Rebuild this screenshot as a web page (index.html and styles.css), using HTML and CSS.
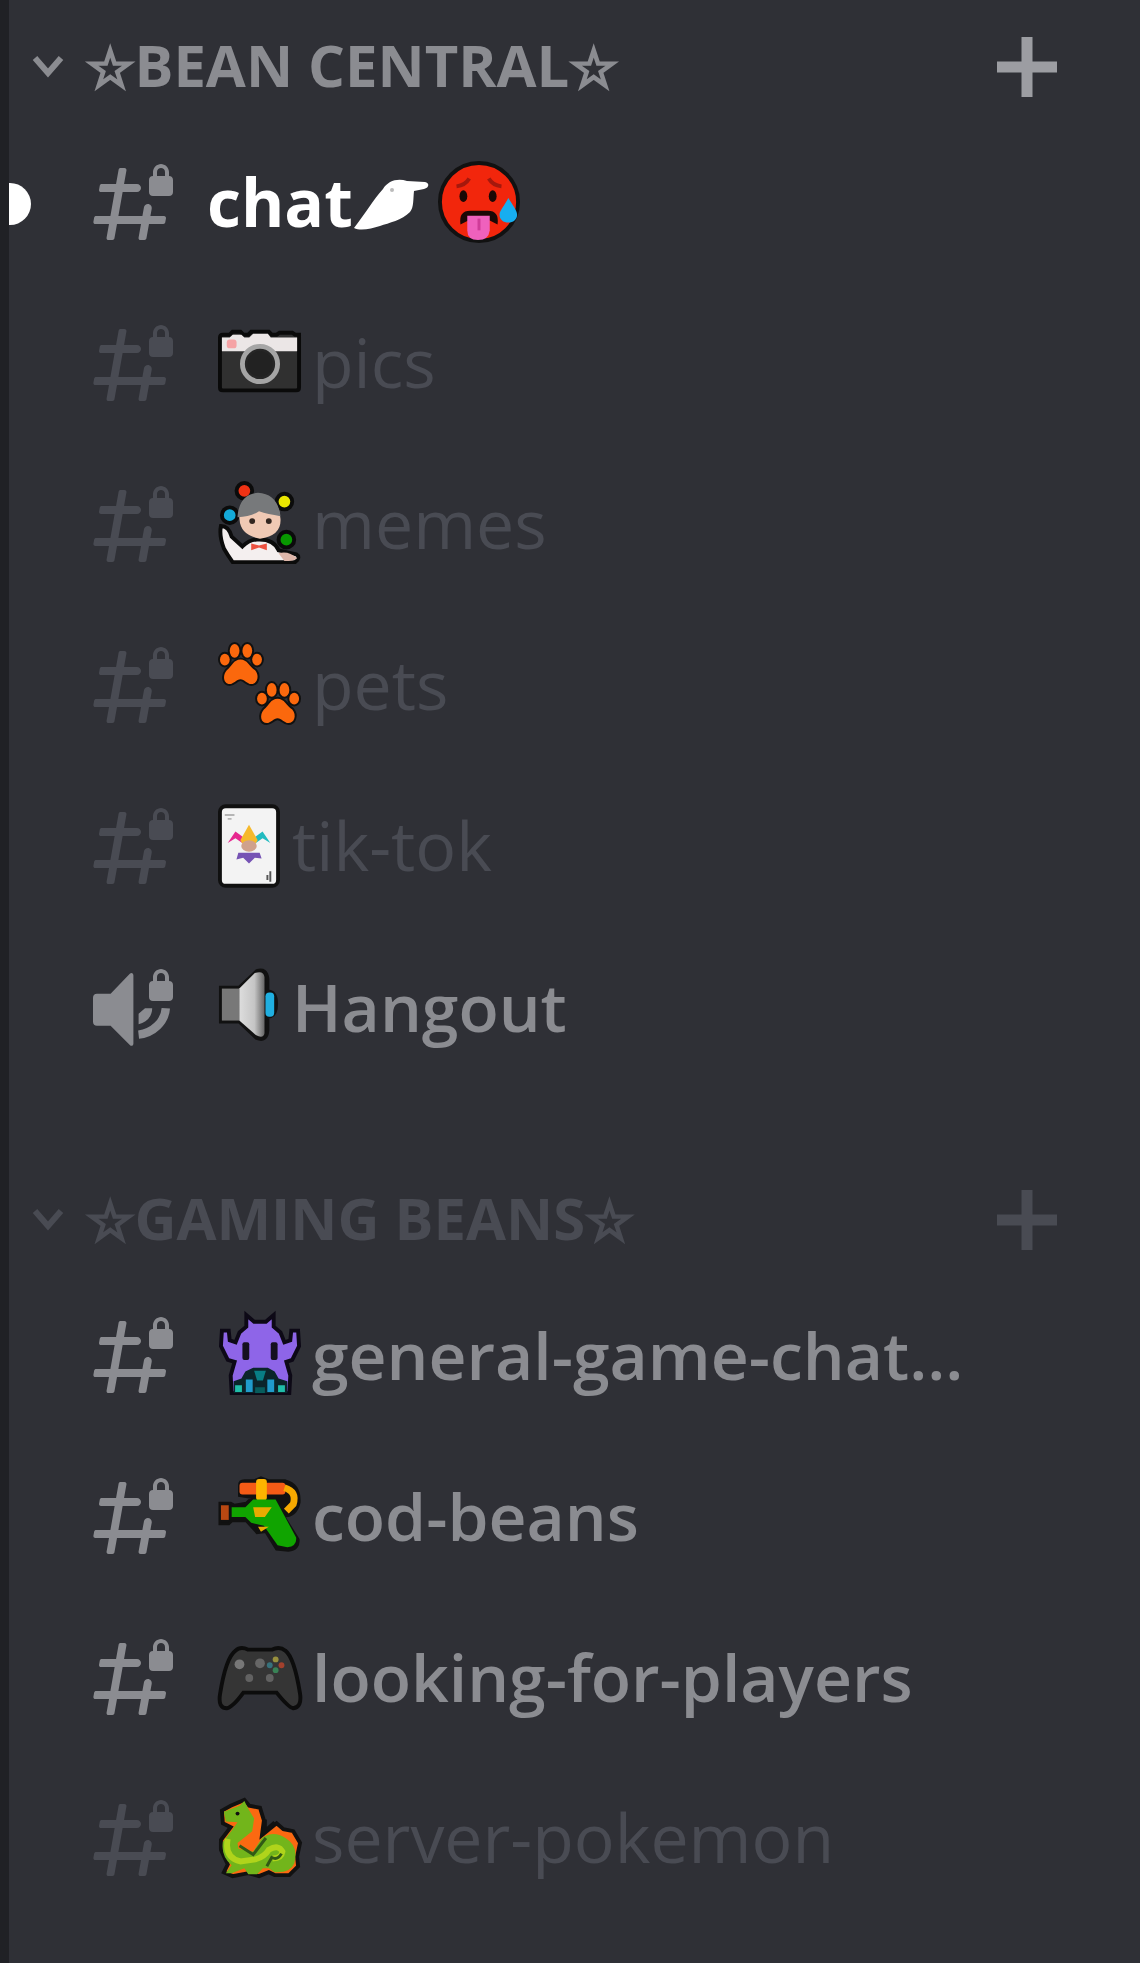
FILE: index.html
```
<!DOCTYPE html>
<html lang="en">
<head>
    <meta charset="UTF-8">
    <meta name="viewport" content="width=device-width, initial-scale=1.0">
    <title>Channels</title>
    <link rel="stylesheet" href="styles.css">
</head>
<body>
    <!-- Shared icons -->
    <svg class="sprite" aria-hidden="true">
        <symbol id="chevron" viewBox="0 0 32 24">
            <path d="M3 3L16 18L29 3" fill="none" stroke="currentColor" stroke-width="6"/>
        </symbol>
        <symbol id="plus" viewBox="0 0 60 60">
            <path d="M30 0V60M0 30H60" fill="none" stroke="currentColor" stroke-width="11"/>
        </symbol>
        <symbol id="lock" viewBox="0 0 24 24">
            <path fill="currentColor" fill-rule="evenodd" d="M21 5V4C21 2.9 20 2 19 2C18 2 17 2.9 17 4V5C16.4 5 16 5.4 16 6V9C16 9.6 16.4 10 17 10H21C21.6 10 22 9.6 22 9V6C22 5.4 21.6 5 21 5ZM20 5H18V4C18 3.4 18.5 3 19 3C19.5 3 20 3.4 20 4V5Z"/>
        </symbol>
        <symbol id="hash" viewBox="0 0 24 24">
            <path fill="currentColor" d="M14 8C14 7.45 13.55 7 13 7H9.76L10.37 3.59C10.42 3.28 10.18 3 9.87 3H8.89C8.65 3 8.44 3.17 8.4 3.41L7.76 7H4.18C3.94 7 3.73 7.17 3.69 7.41L3.51 8.41C3.46 8.72 3.69 9 4 9H7.41L6.35 15H2.77C2.53 15 2.32 15.17 2.28 15.41L2.1 16.41C2.05 16.72 2.28 17 2.6 17H6L5.39 20.41C5.34 20.72 5.58 21 5.89 21H6.87C7.11 21 7.32 20.83 7.36 20.59L8 17H14L13.39 20.41C13.34 20.72 13.58 21 13.89 21H14.87C15.11 21 15.32 20.83 15.36 20.59L16 17H19.58C19.82 17 20.03 16.83 20.07 16.59L20.25 15.59C20.3 15.28 20.07 15 19.75 15H16.35L16.68 13.16C16.78 12.55 16.32 12 15.71 12C15.23 12 14.82 12.34 14.74 12.81L14.35 15H8.35L9.41 9H13C13.55 9 14 8.55 14 8Z"/>
            <use href="#lock"/>
        </symbol>
        <symbol id="voice" viewBox="0 0 24 24">
            <path fill="currentColor" d="M11.2 3.2C11.6 2.8 12.1 3 12.1 3.6V20.6C12.1 21.2 11.6 21.4 11.2 21L6.4 16.2H3C2.4 16.2 2 15.8 2 15.2V9.2C2 8.6 2.4 8.2 3 8.2H6.4ZM13.4 13.2L15 11.8H16.8C16.8 13.8 15.4 15.4 13.4 15.8Z"/>
            <path fill="none" stroke="currentColor" stroke-width="2.1" d="M20.2 11.8C20 15.2 17 18 13.4 18.4"/>
            <use href="#lock"/>
        </symbol>
    </svg>

    <nav class="sidebar" aria-label="Channels">
        <section class="category">
            <header class="category-header">
                <button class="category-toggle" type="button">
                    <svg class="chevron"><use href="#chevron"/></svg>
                    <span class="category-name"><span class="star">☆</span>BEAN CENTRAL<span class="star">☆</span></span>
                </button>
                <button class="add-channel" type="button" aria-label="Create channel">
                    <svg class="plus"><use href="#plus"/></svg>
                </button>
            </header>
            <ul class="channel-list">
                <li>
                    <a href="#" class="channel unread">
                        <svg class="channel-icon"><use href="#hash"/></svg>
                        <span class="channel-name">chat</span>
                        <svg class="emoji-inline" viewBox="0 0 76 52">
                            <path fill="#fff" d="M1 50C12 36 20 22 30 11C35 3 44 0 54 3L72 4C77 5 76 10 71 11L61 13C60 22 61 29 57 34C49 42 36 45 27 48C18 51 7 53 1 50Z"/>
                            <circle cx="39" cy="12" r="2" fill="#bbb"/>
                        </svg>
                        <svg class="emoji-inline face" viewBox="0 0 86 86">
                            <circle cx="43" cy="43" r="40" fill="#f2260c" stroke="#111" stroke-width="4"/>
                            <path d="M20 27Q29 26 33 19M53 19Q57 26 66 27" fill="none" stroke="#a5180c" stroke-width="4"/>
                            <ellipse cx="27" cy="37" rx="4" ry="6" fill="#1b0805"/>
                            <ellipse cx="57" cy="37" rx="4" ry="6" fill="#1b0805"/>
                            <path d="M24 66Q22 52 34 52H52Q64 52 62 66L54 62H32Z" fill="#1b0805"/>
                            <path d="M31 57H54V72Q53 82 42 82Q31 82 31 72Z" fill="#ef61bd"/>
                            <path d="M43 60V72" stroke="#cf3c98" stroke-width="3"/>
                            <path d="M73 39C78 47 82 52 82 56C82 61 78 64 73 64C68 64 64 61 64 56C64 52 69 47 73 39Z" fill="#17aef0"/>
                        </svg>
                    </a>
                </li>
                <li>
                    <a href="#" class="channel muted">
                        <svg class="channel-icon"><use href="#hash"/></svg>
                        <svg class="emoji" viewBox="0 0 86 86">
                            <path d="M5 14H12L15 11H23L26 14H31L34 11H52L55 14H60L63 12H76L79 14H83V68Q83 71 80 71H5Q2 71 2 68V17Q2 14 5 14Z" fill="#303030" stroke="#0a0a0a" stroke-width="4"/>
                            <path d="M4 17H12L15 14H24L27 17H32L36 13H51L54 17H81V31H4Z" fill="#ebe6e6"/>
                            <rect x="9" y="19" width="10" height="9" rx="3" fill="#f5a3a5"/>
                            <circle cx="43" cy="44" r="18" fill="#262626" stroke="#a5a5a5" stroke-width="5"/>
                            <circle cx="43" cy="44" r="13" fill="#222"/>
                        </svg>
                        <span class="channel-name">pics</span>
                    </a>
                </li>
                <li>
                    <a href="#" class="channel muted">
                        <svg class="channel-icon"><use href="#hash"/></svg>
                        <svg class="emoji" viewBox="0 0 86 86">
                            <g stroke="#0b0b0b" stroke-width="4">
                                <path d="M3 45Q11 45 14 56L25 66Q32 59 40 59Q57 58 62 70L80 74Q85 77 79 82H15Q10 75 6 68Q1 55 3 45Z" fill="#f4efef"/>
                                <circle cx="27" cy="9" r="8" fill="#ef3214"/>
                                <circle cx="68" cy="20" r="8" fill="#e9e500"/>
                                <circle cx="12" cy="34" r="8" fill="#14aad8"/>
                                <circle cx="70" cy="59" r="8" fill="#089900"/>
                            </g>
                            <path d="M22 38Q20 13 41 13Q62 13 64 38Q65 55 43 58Q23 55 22 38Z" fill="#f0c9b4"/>
                            <path d="M20 35Q22 12 41 11Q61 12 64 35Q51 33 42 30Q33 36 20 36Z" fill="#77797b"/>
                            <circle cx="35" cy="40" r="3" fill="#332620"/>
                            <circle cx="52" cy="40" r="3" fill="#332620"/>
                            <path d="M34 63L42 65L50 63V70L42 67L34 70Z" fill="#ed5140"/>
                            <path d="M62 73Q72 70 81 78Q78 81 68 81Z" fill="#dfb7aa"/>
                        </svg>
                        <span class="channel-name">memes</span>
                    </a>
                </li>
                <li>
                    <a href="#" class="channel muted">
                        <svg class="channel-icon"><use href="#hash"/></svg>
                        <svg class="emoji" viewBox="0 0 86 86">
                            <defs>
                                <g id="paw">
                                    <ellipse cx="6" cy="17" rx="5" ry="6"/>
                                    <ellipse cx="16" cy="8" rx="5" ry="7"/>
                                    <ellipse cx="29" cy="8" rx="5" ry="7"/>
                                    <ellipse cx="39" cy="17" rx="5" ry="6"/>
                                    <path d="M22 17C29 17 31 24 37 28C42 34 39 42 33 42C29 42 26 37 22 37C18 37 15 42 11 42C5 42 3 34 8 28C13 24 15 17 22 17Z"/>
                                </g>
                            </defs>
                            <g fill="#fb680d" stroke="#111" stroke-width="4" paint-order="stroke">
                                <use href="#paw" x="1"/>
                                <use href="#paw" x="39" y="40"/>
                            </g>
                        </svg>
                        <span class="channel-name">pets</span>
                    </a>
                </li>
                <li>
                    <a href="#" class="channel muted">
                        <svg class="channel-icon"><use href="#hash"/></svg>
                        <svg class="emoji narrow" viewBox="0 0 64 86">
                            <rect x="2" y="2" width="60" height="82" rx="6" fill="#f3f3f3" stroke="#101010" stroke-width="4"/>
                            <path d="M7 11H17M10 15H14" stroke="#b5b5b5" stroke-width="2"/>
                            <path d="M54 69V80M51 73V78" stroke="#555" stroke-width="2"/>
                            <path d="M10 40L18 28L29 36L28 42L18 35Z" fill="#e6288f"/>
                            <path d="M54 40L46 28L35 36L36 42L46 35Z" fill="#22bbc0"/>
                            <path d="M23 37L32 21L41 37L37 43H27Z" fill="#f6b92b"/>
                            <ellipse cx="32" cy="43" rx="8" ry="6" fill="#cfa18c"/>
                            <path d="M21 50H43L45 56L38 55L32 61L26 55L19 57Z" fill="#7653b4"/>
                        </svg>
                        <span class="channel-name">tik-tok</span>
                    </a>
                </li>
                <li>
                    <a href="#" class="channel">
                        <svg class="channel-icon"><use href="#voice"/></svg>
                        <svg class="emoji narrow" viewBox="0 0 64 86">
                            <defs>
                                <linearGradient id="cone">
                                    <stop offset="0" stop-color="#ddd"/>
                                    <stop offset="0.6" stop-color="#c5c5c5"/>
                                    <stop offset="1" stop-color="#666"/>
                                </linearGradient>
                            </defs>
                            <path d="M3 23H22L40 6Q50 3 51 14V27Q60 27 60 40Q60 53 51 53V67Q50 79 40 75L22 58H3Z" fill="#111" stroke="#111" stroke-width="4"/>
                            <rect x="4" y="24" width="18" height="33" fill="#787878"/>
                            <path d="M22 24L38 8Q47 5 48 12V70Q47 76 39 72L22 57Z" fill="url(#cone)"/>
                            <rect x="49" y="28" width="9" height="25" rx="4" fill="#20afe0"/>
                        </svg>
                        <span class="channel-name">Hangout</span>
                    </a>
                </li>
            </ul>
        </section>

        <section class="category">
            <header class="category-header muted">
                <button class="category-toggle" type="button">
                    <svg class="chevron"><use href="#chevron"/></svg>
                    <span class="category-name"><span class="star">☆</span>GAMING BEANS<span class="star">☆</span></span>
                </button>
                <button class="add-channel" type="button" aria-label="Create channel">
                    <svg class="plus"><use href="#plus"/></svg>
                </button>
            </header>
            <ul class="channel-list">
                <li>
                    <a href="#" class="channel">
                        <svg class="channel-icon"><use href="#hash"/></svg>
                        <svg class="emoji" viewBox="0 0 86 86">
                            <path d="M29 14V2L37 9H49L57 2V14L64 20L68 30L74 28L75 18H82L83 34L76 48L70 50L74 64L73 82H14L13 64L17 50L10 48L3 34L4 18H11L12 28L18 30L22 20Z" fill="#8e65e8" stroke="#0d0916" stroke-width="4"/>
                            <rect x="25" y="30" width="7" height="18" rx="2" fill="#15101e"/>
                            <rect x="54" y="30" width="7" height="18" rx="2" fill="#15101e"/>
                            <path d="M16 82V70L24 67L28 60L36 56H51L58 60L62 67L71 70V82Z" fill="#0b252b"/>
                            <path d="M21 74V81M65 74V81" stroke="#20bda9" stroke-width="7"/>
                            <path d="M32 68V81M54 68V81" stroke="#209bcc" stroke-width="7"/>
                            <path d="M37 59H49L46 69H40Z" fill="#087e85"/>
                            <path d="M38 76H48V82H38Z" fill="#075c5c"/>
                        </svg>
                        <span class="channel-name">general-game-chat...</span>
                    </a>
                </li>
                <li>
                    <a href="#" class="channel">
                        <svg class="channel-icon"><use href="#hash"/></svg>
                        <svg class="emoji" viewBox="0 0 86 86">
                            <path d="M22 12Q22 7 27 7H37L44 4L52 7H69Q84 11 83 29Q80 43 67 43L82 67Q83 77 72 78L60 77L49 59L40 60L29 48H14L11 51H2V30H13L17 32L29 30L35 24L22 22Z" fill="#111" stroke="#111" stroke-width="3"/>
                            <rect x="22" y="9" width="47" height="12" rx="3" fill="#f45b16"/>
                            <path d="M68 14Q81 18 77 31L70 38" fill="none" stroke="#f6a900" stroke-width="7"/>
                            <rect x="39" y="5" width="11" height="22" rx="3" fill="#fdb400"/>
                            <path d="M14 34H28L36 26H59L80 65Q81 74 71 75L61 73L47 53L34 50L28 44H14Z" fill="#10a400"/>
                            <path d="M3 32H11V47H3Z" fill="#b94812"/>
                            <path d="M36 34H55L48 44H38ZM41 54H52L44 59Z" fill="#e8ab00"/>
                        </svg>
                        <span class="channel-name">cod-beans</span>
                    </a>
                </li>
                <li>
                    <a href="#" class="channel">
                        <svg class="channel-icon"><use href="#hash"/></svg>
                        <svg class="emoji" viewBox="0 0 86 86">
                            <path d="M18 16Q23 11 31 15H55Q63 11 69 16Q78 23 84 60Q86 74 77 75Q72 74 60 59H26Q15 74 9 75Q0 75 2 61Q8 23 18 16Z" fill="#353535" stroke="#0c0c0c" stroke-width="4"/>
                            <circle cx="22" cy="30" r="5" fill="#777"/>
                            <circle cx="43" cy="29" r="5" fill="#666"/>
                            <circle cx="59" cy="25" r="3" fill="#98903e"/>
                            <circle cx="65" cy="31" r="3" fill="#a3412d"/>
                            <circle cx="53" cy="31" r="3" fill="#37717b"/>
                            <circle cx="59" cy="36" r="3" fill="#398256"/>
                            <circle cx="32" cy="44" r="4" fill="#626262"/>
                            <circle cx="53" cy="44" r="4" fill="#626262"/>
                        </svg>
                        <span class="channel-name">looking-for-players</span>
                    </a>
                </li>
                <li>
                    <a href="#" class="channel muted">
                        <svg class="channel-icon"><use href="#hash"/></svg>
                        <svg class="emoji" viewBox="0 0 86 86">
                            <path d="M4 15L13 10L27 4L32 10L43 12L47 25L45 40L60 28L67 34L77 36L84 48L81 62L82 72L73 81H58L52 78L42 82L31 79L15 82L6 78L10 70L3 55V45L13 32L5 28Z" fill="#fb6911" stroke="#111" stroke-width="4"/>
                            <path d="M48 24V36L58 27" fill="none" stroke="#111" stroke-width="4"/>
                            <path d="M6 16L22 10L27 5L31 13L37 23L35 36L20 48L21 54L36 57L45 43Q57 35 69 43Q83 51 78 69Q74 79 58 78L52 74H46L40 80H31L27 74L14 79H8L14 71Q3 62 5 47L15 34L20 27L8 26Z" fill="#72b51b"/>
                            <path d="M10 44Q6 63 23 67L38 65Q48 62 52 55Q62 49 66 57Q65 64 56 64" fill="none" stroke="#b0d41b" stroke-width="6"/>
                            <path d="M22 51L36 60L49 43M50 72L55 63Q61 66 65 59" fill="none" stroke="#315915" stroke-width="3"/>
                            <circle cx="20" cy="18" r="2" fill="#111"/>
                        </svg>
                        <span class="channel-name">server-pokemon</span>
                    </a>
                </li>
            </ul>
        </section>
    </nav>
</body>
</html>
```

FILE: styles.css
```
* {
    box-sizing: border-box;
}
body {
    margin: 0;
    background: #2f3036;
    font-family: "Open Sans", "Noto Sans", sans-serif;
    color: #8b8c91;
}
.sprite {
    position: absolute;
    width: 0;
    height: 0;
}
.sidebar {
    min-height: 100vh;
    border-left: 9px solid #202125;
    padding-top: 10px;
}
.category {
    margin-bottom: 74px;
}
.category:last-child {
    margin-bottom: 0;
}
/* Category header */
.category-header {
    display: flex;
    align-items: center;
    justify-content: space-between;
    height: 113px;
    padding: 0 83px 0 23px;
}
.category-header button {
    display: flex;
    align-items: center;
    padding: 0;
    border: none;
    background: none;
    color: inherit;
    font: inherit;
    cursor: pointer;
}
.category-name {
    padding-bottom: 4px;
    font-size: 58px;
    line-height: 80px;
    font-weight: 700;
    white-space: nowrap;
}
.star {
    font-family: "DejaVu Sans", sans-serif;
    font-size: 54px;
    line-height: 54px;
    -webkit-text-stroke: 3px currentColor;
}
.chevron {
    width: 32px;
    height: 24px;
    margin-right: 22px;
}
.plus {
    width: 60px;
    height: 60px;
    color: #9c9da2;
}
/* Channels */
.channel-list {
    list-style: none;
    margin: 0;
    padding: 0;
}
.channel {
    position: relative;
    display: flex;
    align-items: center;
    height: 161px;
    padding-left: 76px;
    color: inherit;
    text-decoration: none;
    white-space: nowrap;
}
.channel-icon {
    flex: none;
    width: 96px;
    height: 96px;
    margin-right: 26px;
}
.channel-name {
    padding-bottom: 6px;
    font-size: 66px;
    line-height: 90px;
    font-weight: 600;
}
.emoji {
    flex: none;
    width: 84px;
    height: 84px;
    margin: 0 10px 4px 11px;
    overflow: visible;
}
.emoji.narrow {
    width: 62px;
    margin-right: 12px;
}
.emoji-inline {
    flex: none;
    width: 76px;
    height: 52px;
}
.emoji-inline.face {
    width: 84px;
    height: 84px;
    margin: 0 0 4px 8px;
}
.unread .channel-name {
    color: #fff;
    font-weight: 700;
}
.unread::before {
    content: "";
    position: absolute;
    left: 0;
    width: 22px;
    height: 42px;
    border-radius: 0 21px 21px 0;
    background: #fff;
}
.muted,
.muted .plus {
    color: #494b53;
}
.channel.muted .channel-name {
    font-size: 68px;
    font-weight: 400;
}
```
